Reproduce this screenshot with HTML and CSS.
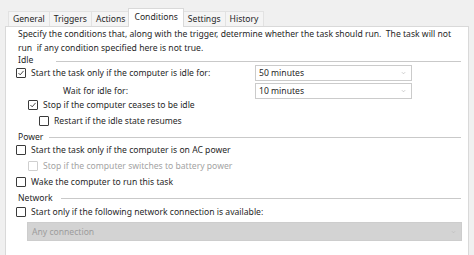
FILE: index.html
```html
<!DOCTYPE html>
<html>
<head>
<meta charset="utf-8">
<link rel="stylesheet" href="styles.css">
</head>
<body>
<div class="tabs">
  <div class="tab">General</div>
  <div class="tab">Triggers</div>
  <div class="tab">Actions</div>
  <div class="tab active">Conditions</div>
  <div class="tab">Settings</div>
  <div class="tab">History</div>
</div>
<div class="panel">
  <p class="desc">Specify the conditions that, along with the trigger, determine whether the task should run.&nbsp; The task will not<br>run&nbsp; if any condition specified here is not true.</p>

  <div class="group idle"><span class="glabel">Idle</span><i class="rule"></i></div>

  <div class="row sel-row first">
    <label class="check"><span class="box on"><svg viewBox="0 0 10 10"><polyline points="1.8,5 4,7.3 8.2,2.4"/></svg></span>Start the task only if the computer is idle for:</label>
    <div class="select"><span>50 minutes</span><svg class="chev" viewBox="0 0 6 4"><polyline points="1,1 3,3 5,1"/></svg></div>
  </div>
  <div class="row sel-row wait">
    <span class="wait-label">Wait for idle for:</span>
    <div class="select"><span>10 minutes</span><svg class="chev" viewBox="0 0 6 4"><polyline points="1,1 3,3 5,1"/></svg></div>
  </div>

  <div class="row lvl1 flush"><label class="check"><span class="box on"><svg viewBox="0 0 10 10"><polyline points="1.8,5 4,7.3 8.2,2.4"/></svg></span>Stop if the computer ceases to be idle</label></div>
  <div class="row lvl2"><label class="check"><span class="box"></span>Restart if the idle state resumes</label></div>

  <div class="row group power"><span class="glabel">Power</span><i class="rule"></i></div>
  <div class="row tight1"><label class="check"><span class="box"></span>Start the task only if the computer is on AC power</label></div>
  <div class="row lvl1 disabled"><label class="check"><span class="box"></span>Stop if the computer switches to battery power</label></div>
  <div class="row"><label class="check"><span class="box"></span>Wake the computer to run this task</label></div>

  <div class="row group network"><span class="glabel">Network</span><i class="rule"></i></div>
  <div class="row tight2"><label class="check"><span class="box"></span>Start only if the following network connection is available:</label></div>
  <div class="net-select"><span>Any connection</span><svg class="chev" viewBox="0 0 6 4"><polyline points="1,1 3,3 5,1"/></svg></div>
</div>
</body>
</html>
```

FILE: styles.css
```css
html, body {
  margin: 0;
  padding: 0;
  background: #f0f0f0;
  width: 474px;
  height: 255px;
  overflow: hidden;
}
body {
  font-family: "Noto Sans", "Open Sans", sans-serif;
  font-size: 8.6px;
  color: #1f1f1f;
}
.tabs {
  display: flex;
  align-items: flex-end;
  height: 26px;
  padding-left: 8px;
  box-sizing: border-box;
}
.tab {
  height: 15px;
  line-height: 15px;
  padding: 0 4px;
  box-sizing: border-box;
  background: #f4f4f4;
  border: 1px solid #e2e2e2;
  border-bottom: none;
  margin-right: -1px;
  white-space: nowrap;
}
.tab.active {
  height: 19px;
  line-height: 17px;
  padding: 0 5px;
  background: #fff;
  border-color: #d9d9d9;
  margin: 0 -1px -1px -1px;
  position: relative;
  z-index: 1;
}
.panel {
  margin: 0 5px;
  background: #fff;
  border: 1px solid #d9d9d9;
  border-bottom: none;
  padding: 0 6px 0 10px;
  height: 240px;
}
.desc {
  margin: 0;
  padding-left: 2px;
  line-height: 14px;
  height: 28px;
  white-space: nowrap;
}
.group {
  display: flex;
  align-items: center;
  padding-left: 2px;
  height: 12px;
  line-height: 12px;
}
.group.idle {
  height: 10px;
  line-height: 10px;
}
.glabel {
  margin-right: 6px;
}
.idle .glabel {
  margin-right: 23px;
}
.network .glabel {
  margin-right: 8px;
}
.rule {
  flex: 1;
  height: 0;
  border-top: 1px solid #c9c9c9;
}
.idle .rule {
  margin-top: 3px;
  margin-right: 1px;
}
.power .rule, .network .rule {
  margin-right: 1px;
}
.row {
  height: 12px;
  line-height: 12px;
  margin-top: 4px;
  display: flex;
  align-items: center;
}
.row.flush { margin-top: 0; }
.row.tight1 { margin-top: 1px; }
.row.tight2 { margin-top: 2px; }
.sel-row {
  height: 16px;
  line-height: 16px;
  display: grid;
  grid-template-columns: 239px 157px;
  align-items: center;
}
.sel-row.first { margin-top: 0; }
.sel-row.wait { margin-top: 2px; }
.wait-label {
  padding-left: 47px;
}
.check {
  display: flex;
  align-items: center;
  white-space: nowrap;
}
.box {
  width: 10px;
  height: 10px;
  box-sizing: border-box;
  border: 1px solid #3a3a3a;
  border-radius: 1px;
  margin-right: 5px;
  display: inline-flex;
  background: #fff;
}
.box svg {
  width: 8px;
  height: 8px;
  fill: none;
  stroke: #333;
  stroke-width: 1.1;
}
.lvl1 { padding-left: 12px; }
.lvl2 { padding-left: 23px; }
.disabled { color: #a3a3a3; }
.disabled .box { border-color: #cfcfcf; }
.select {
  height: 16px;
  box-sizing: border-box;
  border: 1px solid #cbcbcb;
  background: #fff;
  display: flex;
  align-items: center;
  justify-content: space-between;
  padding: 0 5px 0 3px;
  line-height: 14px;
}
.chev {
  width: 5px;
  height: 4px;
  fill: none;
  stroke: #b5b5b5;
  stroke-width: 0.8;
}
.net-select {
  margin-top: 4px;
  margin-left: 11px;
  height: 19px;
  box-sizing: border-box;
  background: #d3d3d3;
  border: 1px solid #cdcdcd;
  color: #9c9c9c;
  display: flex;
  align-items: center;
  justify-content: space-between;
  padding: 0 5px 0 4px;
}
.net-select .chev { stroke: #bdbdbd; }
```
